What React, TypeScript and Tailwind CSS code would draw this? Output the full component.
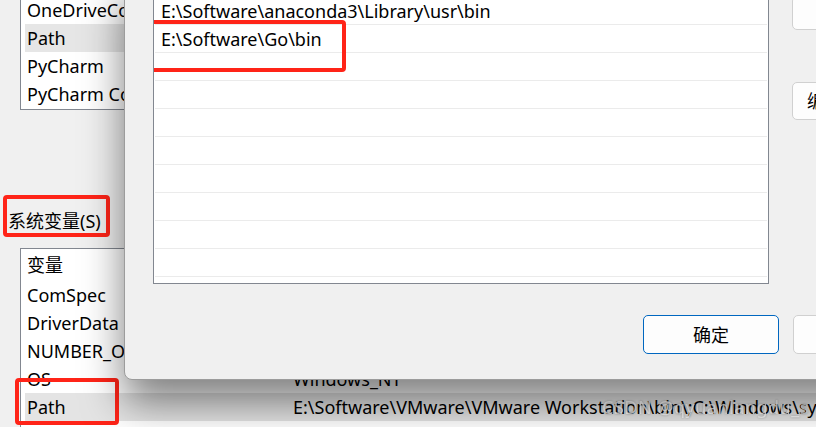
import React from "react";

const userVars = ["OneDriveConsumer", "Path", "PyCharm", "PyCharm Community Edition"];

const sysVars = [
    ["ComSpec", "C:\\Windows\\system32\\cmd.exe"],
    ["DriverData", "C:\\Windows\\System32\\Drivers\\DriverData"],
    ["NUMBER_OF_PROCESSORS", "16"],
    ["OS", "Windows_NT"],
    ["Path", "E:\\Software\\VMware\\VMware Workstation\\bin\\;C:\\Windows\\system32;C:\\Windows"],
];

const pathItems = [
    "E:\\Software\\anaconda3\\Library\\usr\\bin",
    "E:\\Software\\Go\\bin",
    "", "", "", "", "", "", "", "", "",
];

function RedBox({ className }: { className: string }) {
    return <div className={`absolute border-[4px] border-[#ff2418] rounded-[4px] pointer-events-none ${className}`} />;
}

export default function App() {
    return (
        <div className="relative w-[816px] h-[427px] overflow-hidden bg-[#f0f0f0] text-[18px] leading-[28px] text-black font-['Noto_Sans','Noto_Sans_CJK_SC',sans-serif]">
            {/* environment variables window (behind) */}
            <div className="pl-[20px]">
                <div className="mt-[-5px] h-[115px] w-[900px] bg-white border border-[#828790]">
                    {userVars.map((name, i) => (
                        <div key={name} className={`h-[28px] whitespace-nowrap ${i === 1 ? "bg-[#e6e6e6] ml-[4px] pl-[2px]" : "pl-[6px]"}`}>
                            {name}
                        </div>
                    ))}
                </div>
            </div>

            <div className="relative mt-[97px] ml-[8px] h-[28px] whitespace-nowrap">
                系统变量(S)
                <RedBox className="left-[-5px] top-[-12px] w-[107px] h-[42px]" />
            </div>

            <div className="pl-[20px] mt-[13px]">
                <div className="w-[900px] h-[200px] bg-white border border-[#828790]">
                    <div className="h-[32px] flex items-center pl-[6px]">
                        <span className="w-[266px] shrink-0">变量</span>
                        <span>值</span>
                    </div>
                    {sysVars.map(([name, value], i) => (
                        <div
                            key={name}
                            className={`relative h-[28px] flex items-center whitespace-nowrap ${i === 4 ? "bg-[#e4e4e4] ml-[4px] pl-[2px]" : "pl-[6px]"}`}
                        >
                            <span className="w-[266px] shrink-0 overflow-hidden">{name}</span>
                            <span className="shrink-0">{value}</span>
                            {i === 4 && (
                                <>
                                    <RedBox className="left-[-10px] top-[-15px] w-[104px] h-[47px]" />
                                    <span className="absolute left-[577px] top-[0px] text-[18px] text-white/80 tracking-[0.5px] drop-shadow-[0_0_1px_rgba(0,0,0,0.35)]">
                                        CSDN @qyuanlangdu_s
                                    </span>
                                </>
                            )}
                        </div>
                    ))}
                </div>
            </div>

            {/* edit environment variable dialog */}
            <div className="absolute left-[124px] top-[-24px] w-[900px] bg-[#f0f0f0] border border-[#9c9c9c] rounded-bl-[8px] pl-[28px] pt-[19px] pb-[25px] shadow-[0_22px_40px_rgba(0,0,0,0.5)]">
                <div className="flex gap-[23px]">
                    <div className="relative w-[616px] h-[288px] shrink-0 bg-white border border-[#828790] overflow-hidden">
                        {pathItems.map((p, i) => (
                            <div key={i} className="relative h-[28px] mx-[1px] border-b border-[#ebebeb] pl-[6px] whitespace-nowrap">
                                {p}
                                {i === 1 && <RedBox className="left-[-5px] top-[-5px] w-[196px] h-[52px]" />}
                            </div>
                        ))}
                    </div>
                    <div className="flex flex-col shrink-0">
                        <div className="h-[34px] w-[130px] bg-[#fdfdfd] border border-[#d0d0d0] rounded-[5px]" />
                        <div className="mt-[52px] h-[38px] w-[130px] bg-[#fdfdfd] border border-[#d0d0d0] rounded-[5px] flex items-center pl-[14px] whitespace-nowrap">
                            编辑(E)
                        </div>
                    </div>
                </div>
                <div className="mt-[31px] ml-[490px] flex gap-[14px]">
                    <div className="w-[136px] h-[39px] shrink-0 bg-[#fdfdfd] border border-[#0067c0] rounded-[5px] flex items-center justify-center">
                        确定
                    </div>
                    <div className="w-[136px] h-[39px] shrink-0 bg-[#fdfdfd] border border-[#d0d0d0] rounded-[5px] flex items-center justify-center">
                        取消
                    </div>
                </div>
            </div>
        </div>
    );
}
